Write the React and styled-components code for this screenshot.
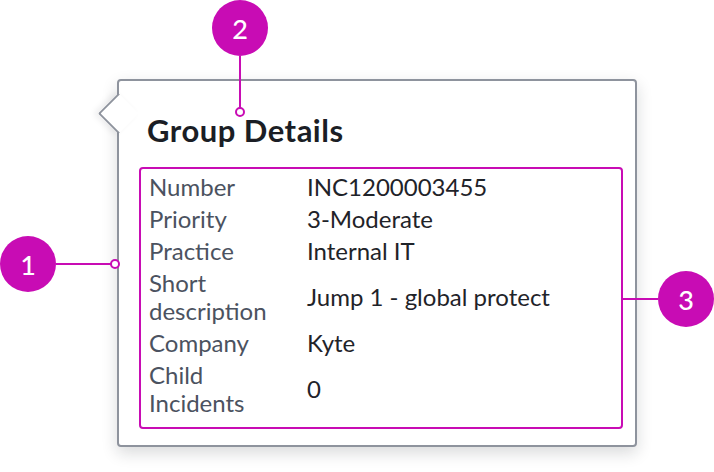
import React from 'react';
import styled, { createGlobalStyle } from 'styled-components';

const MAGENTA = '#c80cb4';
const BORDER = '#8e939d';

const GlobalStyle = createGlobalStyle`
    html, body {
        margin: 0;
        padding: 0;
        background: #ffffff;
    }

    body {
        font-family: Lato, "Open Sans", "Liberation Sans", sans-serif;
    }
`;

const Stage = styled.div`
    position: relative;
    width: 714px;
    height: 472px;
    overflow: hidden;
    box-sizing: border-box;
    padding: 79px 0 0 117px;
    background: #ffffff;
`;

const Card = styled.div`
    position: relative;
    width: 520px;
    height: 368px;
    box-sizing: border-box;
    border: 2px solid ${BORDER};
    border-radius: 4px;
    background: #ffffff;
    box-shadow: 0 6px 16px rgba(20, 24, 34, 0.16);
    padding: 31px 12px 16px 20px;
    display: flex;
    flex-direction: column;
    gap: 19px;

    /* popover pointer */
    &::before {
        content: '';
        position: absolute;
        left: -15.5px;
        top: 18px;
        width: 29px;
        height: 29px;
        box-sizing: border-box;
        background: #ffffff;
        border-left: 2px solid ${BORDER};
        border-bottom: 2px solid ${BORDER};
        border-bottom-left-radius: 2px;
        transform: rotate(45deg);
        box-shadow: -3px 3px 6px rgba(20, 24, 34, 0.08);
    }
`;

const Title = styled.h2`
    position: relative;
    margin: 0 0 0 8px;
    font-size: 31px;
    line-height: 36px;
    font-weight: 700;
    letter-spacing: 0.5px;
    color: #1b1e25;
`;

const DetailsBox = styled.div`
    flex: 1;
    border: 2px solid ${MAGENTA};
    border-radius: 4px;
    padding: 4px 8px 10px 8px;
    display: grid;
    grid-template-columns: 130px 1fr;
    column-gap: 28px;
    row-gap: 4px;
    align-content: start;
    align-items: center;
`;

const Label = styled.div`
    font-size: 24px;
    line-height: 28px;
    color: #4b5260;
`;

const Value = styled.div`
    font-size: 24px;
    line-height: 28px;
    color: #1f2329;
`;

const Callout = styled.div`
    position: absolute;
    left: ${({ $left }) => $left}px;
    top: ${({ $top }) => $top}px;
    display: flex;
    flex-direction: ${({ $vertical }) => ($vertical ? 'column' : 'row')};
    align-items: center;
`;

const Badge = styled.div`
    flex: none;
    width: 56px;
    height: 56px;
    border-radius: 50%;
    background: ${MAGENTA};
    color: #ffffff;
    display: flex;
    align-items: center;
    justify-content: center;
    font-size: 27px;
    font-weight: 500;
    line-height: 1;
`;

const Line = styled.div`
    flex: none;
    width: ${({ $vertical, $length }) => ($vertical ? 2 : $length)}px;
    height: ${({ $vertical, $length }) => ($vertical ? $length : 2)}px;
    background: ${MAGENTA};
`;

const Ring = styled.div`
    flex: none;
    width: 10px;
    height: 10px;
    box-sizing: border-box;
    border-radius: 50%;
    border: 2px solid ${MAGENTA};
    background: #ffffff;
    margin: ${({ $vertical }) => ($vertical ? '-1px 0 0 0' : '0 0 0 -1px')};
`;

const details = [
    { label: 'Number', value: 'INC1200003455' },
    { label: 'Priority', value: '3-Moderate' },
    { label: 'Practice', value: 'Internal IT' },
    { label: 'Short description', value: 'Jump 1 - global protect' },
    { label: 'Company', value: 'Kyte' },
    { label: 'Child Incidents', value: '0' },
];

const App = () => {
    return (
        <>
            <GlobalStyle />
            <Stage>
                <Card>
                    <Title>Group Details</Title>
                    <DetailsBox>
                        {details.map(({ label, value }) => (
                            <React.Fragment key={label}>
                                <Label>{label}</Label>
                                <Value>{value}</Value>
                            </React.Fragment>
                        ))}
                    </DetailsBox>
                </Card>

                <Callout $left={0} $top={236}>
                    <Badge>1</Badge>
                    <Line $length={55} />
                    <Ring />
                </Callout>

                <Callout $left={212} $top={0} $vertical>
                    <Badge>2</Badge>
                    <Line $vertical $length={52} />
                    <Ring $vertical />
                </Callout>

                <Callout $left={623} $top={271}>
                    <Line $length={35} />
                    <Badge>3</Badge>
                </Callout>
            </Stage>
        </>
    );
};

export default App;
